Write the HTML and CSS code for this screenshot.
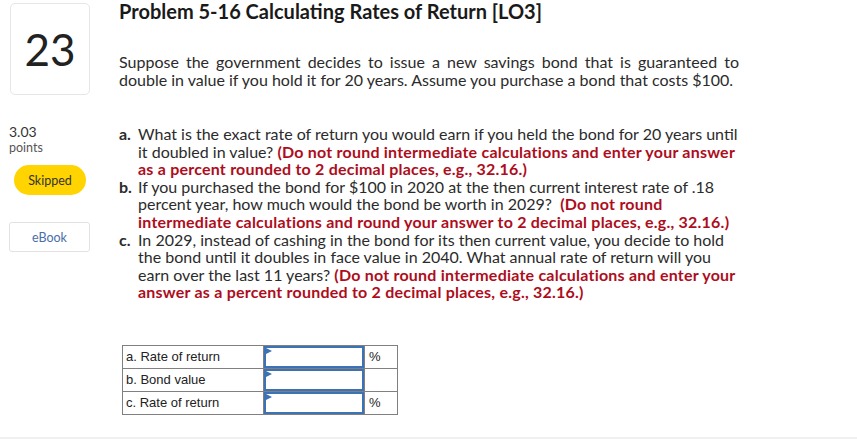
FILE: index.html
```html
<!DOCTYPE html>
<html>
<head>
<meta charset="utf-8">
<link rel="stylesheet" href="styles.css">
</head>
<body>
<div class="page">
  <aside class="side">
    <div class="qnum">23</div>
    <div class="score">3.03</div>
    <div class="pts">points</div>
    <div class="skipped">Skipped</div>
    <div class="ebook">eBook</div>
  </aside>
  <main class="main">
    <h1 class="title">Problem 5-16 Calculating Rates of Return [LO3]</h1>
    <p class="intro">Suppose the government decides to issue a new savings bond that is guaranteed to double in value if you hold it for 20 years. Assume you purchase a bond that costs $100.</p>
    <ol class="parts">
      <li><span class="lbl">a.</span><span class="txt">What is the exact rate of return you would earn if you held the bond for 20 years until<br>it doubled in value? <b class="red">(Do not round intermediate calculations and enter your answer<br>as a percent rounded to 2 decimal places, e.g., 32.16.)</b></span></li>
      <li><span class="lbl">b.</span><span class="txt">If you purchased the bond for $100 in 2020 at the then current interest rate of .18<br>percent year, how much would the bond be worth in 2029? &nbsp;<b class="red">(Do not round<br>intermediate calculations and round your answer to 2 decimal places, e.g., 32.16.)</b></span></li>
      <li><span class="lbl">c.</span><span class="txt">In 2029, instead of cashing in the bond for its then current value, you decide to hold<br>the bond until it doubles in face value in 2040. What annual rate of return will you<br>earn over the last 11 years? <b class="red">(Do not round intermediate calculations and enter your<br>answer as a percent rounded to 2 decimal places, e.g., 32.16.)</b></span></li>
    </ol>
    <table class="answers">
      <tr><td class="c-lbl">a. Rate of return</td><td class="c-in"><div class="inp"><span class="flag"></span></div></td><td class="c-unit">%</td></tr>
      <tr><td class="c-lbl">b. Bond value</td><td class="c-in"><div class="inp"><span class="flag"></span></div></td><td class="c-unit"></td></tr>
      <tr><td class="c-lbl">c. Rate of return</td><td class="c-in"><div class="inp"><span class="flag"></span></div></td><td class="c-unit">%</td></tr>
    </table>
  </main>
</div>
<div class="bottom"></div>
</body>
</html>
```
FILE: styles.css
```css
html, body { margin: 0; padding: 0; background: #fff; }
body { font-family: Lato, "Open Sans", sans-serif; color: #2b2b2b; width: 857px; height: 439px; overflow: hidden; position: relative; }
.page { display: flex; height: 437px; }
.side { width: 119px; flex: none; display: flex; flex-direction: column; align-items: flex-start; }
.qnum { margin: 3px 0 0 10px; width: 78px; height: 90px; border: 1px solid #e6e6e6; border-radius: 5px; display: flex; align-items: center; justify-content: center; font-size: 44px; color: #222; box-sizing: content-box; }
.score { margin: 29px 0 0 9px; font-size: 14px; line-height: 16px; color: #333; }
.pts { margin: 0 0 0 9px; font-size: 12.5px; line-height: 15px; color: #555; }
.skipped { margin: 10px 0 0 14px; width: 72px; height: 30px; border-radius: 15px; background: #ffd400; font-size: 12.5px; display: flex; align-items: center; justify-content: center; color: #333; }
.ebook { margin: 27px 0 0 9px; width: 79px; height: 28px; border: 1px solid #e2e2e2; border-radius: 3px; display: flex; align-items: center; justify-content: center; font-size: 12.5px; color: #4a6ea8; }
.main { flex: 1; }
.title { margin: 0; font-size: 20px; line-height: 22px; font-weight: 700; color: #1a1a1a; }
.intro { margin: 31px 0 0; width: 620px; font-size: 16px; line-height: 17.5px; text-align: justify; text-align-last: left; }
.parts { list-style: none; margin: 37px 0 0; padding: 0; font-size: 16px; line-height: 17.6px; }
.parts li { display: flex; }
.lbl { width: 19px; flex: none; font-weight: 700; }
.txt { white-space: nowrap; }
.red { color: #ad0d1c; font-weight: 700; letter-spacing: 0.22px; }
.answers { margin: 44px 0 0 3px; border-collapse: collapse; font-family: "Liberation Sans", Arial, sans-serif; font-size: 13px; color: #222; }
.answers td { border: 1px solid #808080; height: 21px; padding: 0; }
.c-lbl { width: 137px; padding-left: 3px !important; }
.c-in { width: 100px; }
.c-unit { width: 28px; padding-left: 4px !important; }
.inp { position: relative; height: 18px; margin: 0; border: 2px solid #3d72b4; }
.flag { position: absolute; left: 0; top: 0; width: 0; height: 0; border-top: 3px solid transparent; border-bottom: 3px solid transparent; border-left: 6px solid #3d72b4; }
.bottom { position: absolute; left: 0; right: 0; bottom: 0; height: 2px; background: #f0f0f0; }
```
